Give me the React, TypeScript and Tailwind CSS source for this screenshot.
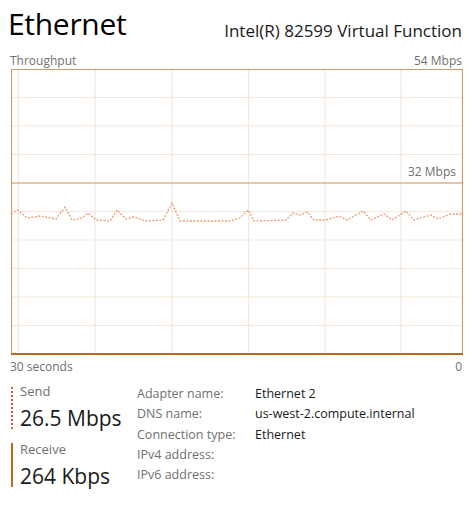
import React from "react";

const pts: [number, number][] = [
  [11, 214], [18, 210], [27, 218], [40, 216], [56, 219], [65, 207], [72, 220], [82, 218], [88, 213],
  [96, 220], [110, 221], [117, 210], [126, 219], [134, 217], [146, 221], [163, 220], [172, 203],
  [180, 221], [230, 221], [240, 218], [248, 210], [254, 221], [286, 220], [293, 213], [300, 215],
  [307, 212], [314, 220], [326, 220], [339, 216], [347, 220], [363, 211], [371, 220], [384, 214],
  [392, 220], [406, 211], [414, 220], [431, 215], [438, 219], [451, 214], [462, 214],
];

function Chart() {
  const vx = [7.5, 84, 161, 237.5, 314, 390];
  const hy = [28.5, 57, 85.5, 142.5, 171, 199.5, 228, 256.5];
  const d = pts.map(([x, y], i) => `${i ? "L" : "M"}${x - 11} ${y - 69}`).join(" ");
  return (
    <div className="relative h-[286px] w-[452px]">
      <svg width="452" height="286" viewBox="0 0 452 286" className="block">
        <rect x="0" y="0" width="452" height="286" fill="#fff" />
        {vx.map((x) => (
          <line key={x} x1={x} y1={0} x2={x} y2={286} stroke="#f4e8de" strokeWidth="1.2" />
        ))}
        {hy.map((y) => (
          <line key={y} x1={0} y1={y} x2={452} y2={y} stroke="#f4e8de" strokeWidth="1.2" />
        ))}
        <line x1={0} y1={114} x2={452} y2={114} stroke="#d9b48c" strokeWidth="1.5" />
        <path d={d} fill="none" stroke="#ec9a70" strokeWidth="1.3" strokeDasharray="2 1.5" />
        <path d="M0.5 286 L0.5 0.5 L451.5 0.5 L451.5 286" fill="none" stroke="#d49868" strokeWidth="1.2" />
        <line x1={0} y1={285} x2={452} y2={285} stroke="#b86a2a" strokeWidth="2" />
      </svg>
      <div className="absolute right-[7px] top-[96px] text-[12px] leading-[14px] text-[#707070]">32 Mbps</div>
    </div>
  );
}

export default function App() {
  return (
    <div
      className="h-[518px] w-[474px] overflow-hidden bg-white text-black"
      style={{ fontFamily: '"Open Sans", "Noto Sans", sans-serif' }}
    >
      <div className="flex items-end justify-between pl-[8px] pr-[12px] pt-[4px]">
        <div className="text-[30px] leading-[40px] tracking-[-0.3px]">Ethernet</div>
        <div className="pb-[2px] text-[17px] leading-[22px] text-[#1a1a1a]">Intel(R) 82599 Virtual Function</div>
      </div>
      <div className="flex justify-between pl-[10px] pr-[12px] pt-[9px] text-[12px] leading-[15px] text-[#707070]">
        <span>Throughput</span>
        <span>54 Mbps</span>
      </div>
      <div className="pl-[11px] pt-[1px]">
        <Chart />
      </div>
      <div className="flex justify-between pl-[10px] pr-[12px] pt-[4px] text-[12px] leading-[15px] text-[#707070]">
        <span>30 seconds</span>
        <span>0</span>
      </div>
      <div className="flex pl-[11px] pt-[10px]">
        <div className="flex w-[126px] flex-col">
          <div className="flex items-start">
            <div
              className="mt-[3px] h-[42px] w-[2px]"
              style={{ backgroundImage: "repeating-linear-gradient(to bottom, #e0503a 0 2px, transparent 2px 4px)" }}
            />
            <div className="pl-[7px]">
              <div className="text-[13px] leading-[14px] text-[#707070]">Send</div>
              <div className="pt-[6px] text-[21px] leading-[28px] text-[#1a1a1a]">26.5 Mbps</div>
            </div>
          </div>
          <div className="mt-[10px] flex items-start">
            <div className="mt-[1px] h-[44px] w-[2px] bg-[#c06820]" />
            <div className="pl-[7px]">
              <div className="text-[13px] leading-[14px] text-[#707070]">Receive</div>
              <div className="pt-[6px] text-[21px] leading-[28px] text-[#1a1a1a]">264 Kbps</div>
            </div>
          </div>
        </div>
        <div className="grid grid-cols-[118px_1fr] self-start text-[12.5px] leading-[20.3px]">
          <span className="text-[#707070]">Adapter name:</span>
          <span className="text-[#1a1a1a]">Ethernet 2</span>
          <span className="text-[#707070]">DNS name:</span>
          <span className="text-[#1a1a1a]">us-west-2.compute.internal</span>
          <span className="text-[#707070]">Connection type:</span>
          <span className="text-[#1a1a1a]">Ethernet</span>
          <span className="text-[#707070]">IPv4 address:</span>
          <span />
          <span className="text-[#707070]">IPv6 address:</span>
          <span />
        </div>
      </div>
    </div>
  );
}
